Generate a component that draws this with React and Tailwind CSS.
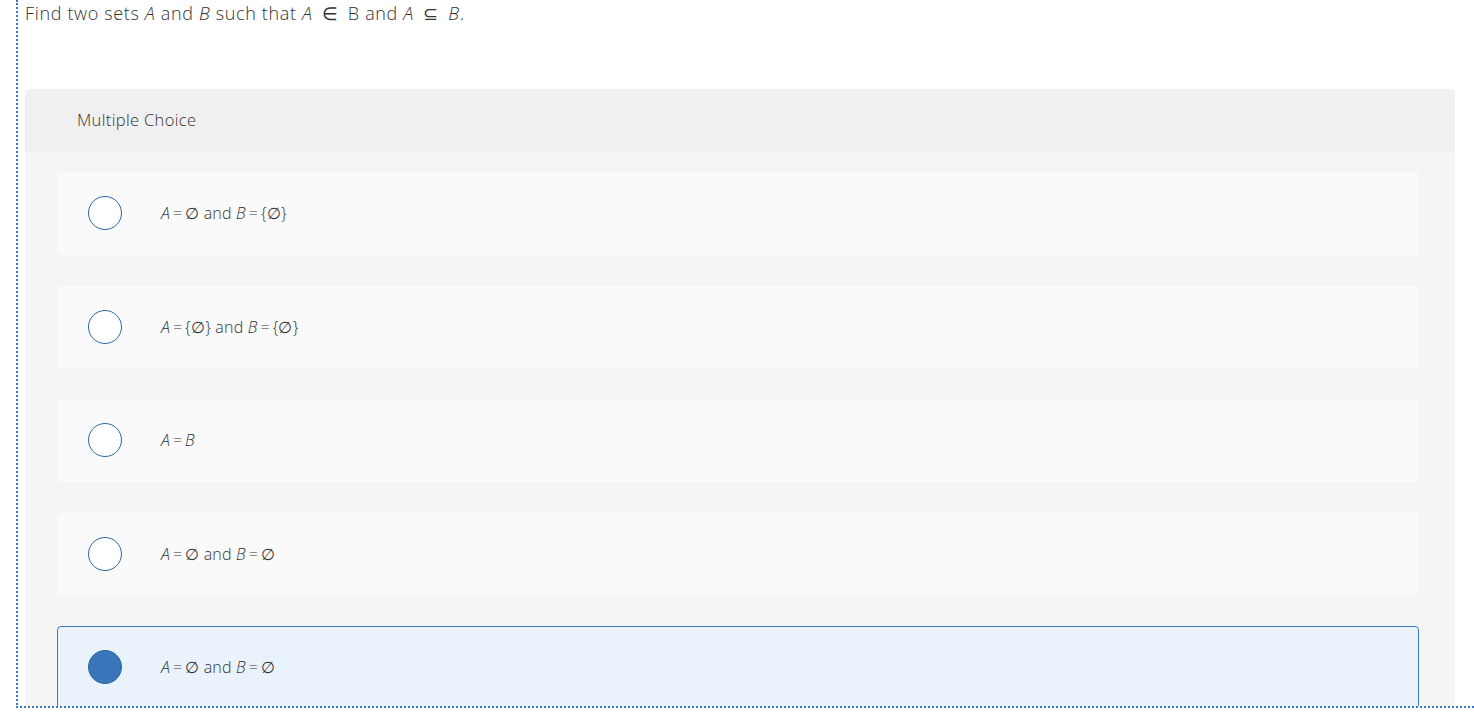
import React from "react";

const M = ({ children }) => <span className="italic">{children}</span>;
const Sym = ({ children }) => <span className="mx-[4px]">{children}</span>;

function Option({ selected, children }) {
  return (
    <div
      className={
        "flex h-[82.5px] shrink-0 items-center rounded-[4px] " +
        (selected
          ? "border border-[#3b78c0] bg-[#eaf2fb] pl-[30px]"
          : "bg-[#fafafa] pl-[31px]")
      }
    >
      <div
        className={
          "h-[34px] w-[34px] shrink-0 rounded-full border " +
          (selected ? "border-[#2d67a3] bg-[#3975b9]" : "border-[#2d67a3] bg-white")
        }
      />
      <div className="ml-[39px] text-[16px] font-light tracking-[0.2px] text-[#333]">{children}</div>
    </div>
  );
}

const T = "\u2009";

export default function App() {
  return (
    <div
      className="ml-[16px] h-[708px] overflow-hidden border-b-2 border-l-2 border-dotted border-[#3a76c4] bg-white pl-[7px] text-[#333]"
      style={{ fontFamily: '"Open Sans", "Liberation Sans", sans-serif' }}
    >
      <div className="h-[27px] pt-0 text-[18px] font-light leading-[26px] tracking-[0.65px] text-[#333]">
        Find two sets <M>A</M> and <M>B</M> such that <M>A</M> <Sym>∈</Sym> B and <M>A</M> <Sym>⊆</Sym> <M>B</M>.
      </div>
      <div className="mt-[62px] w-[1430px] overflow-hidden rounded-t-[5px] bg-[#f5f5f5]">
        <div className="flex h-[63px] items-center bg-[#f0f0f0] pl-[52px] text-[16.5px] font-light tracking-[0.35px] text-[#333]">
          Multiple Choice
        </div>
        <div className="flex flex-col gap-[31px] pl-[32px] pr-[36px] pt-[20px]">
          <Option>
            <M>A</M>{T}={T}∅ and <M>B</M>{T}={T}{"{∅}"}
          </Option>
          <Option>
            <M>A</M>{T}={T}{"{∅}"} and <M>B</M>{T}={T}{"{∅}"}
          </Option>
          <Option>
            <M>A</M>{T}={T}<M>B</M>
          </Option>
          <Option>
            <M>A</M>{T}={T}∅ and <M>B</M>{T}={T}∅
          </Option>
          <Option selected>
            <M>A</M>{T}={T}∅ and <M>B</M>{T}={T}∅
          </Option>
        </div>
      </div>
    </div>
  );
}
